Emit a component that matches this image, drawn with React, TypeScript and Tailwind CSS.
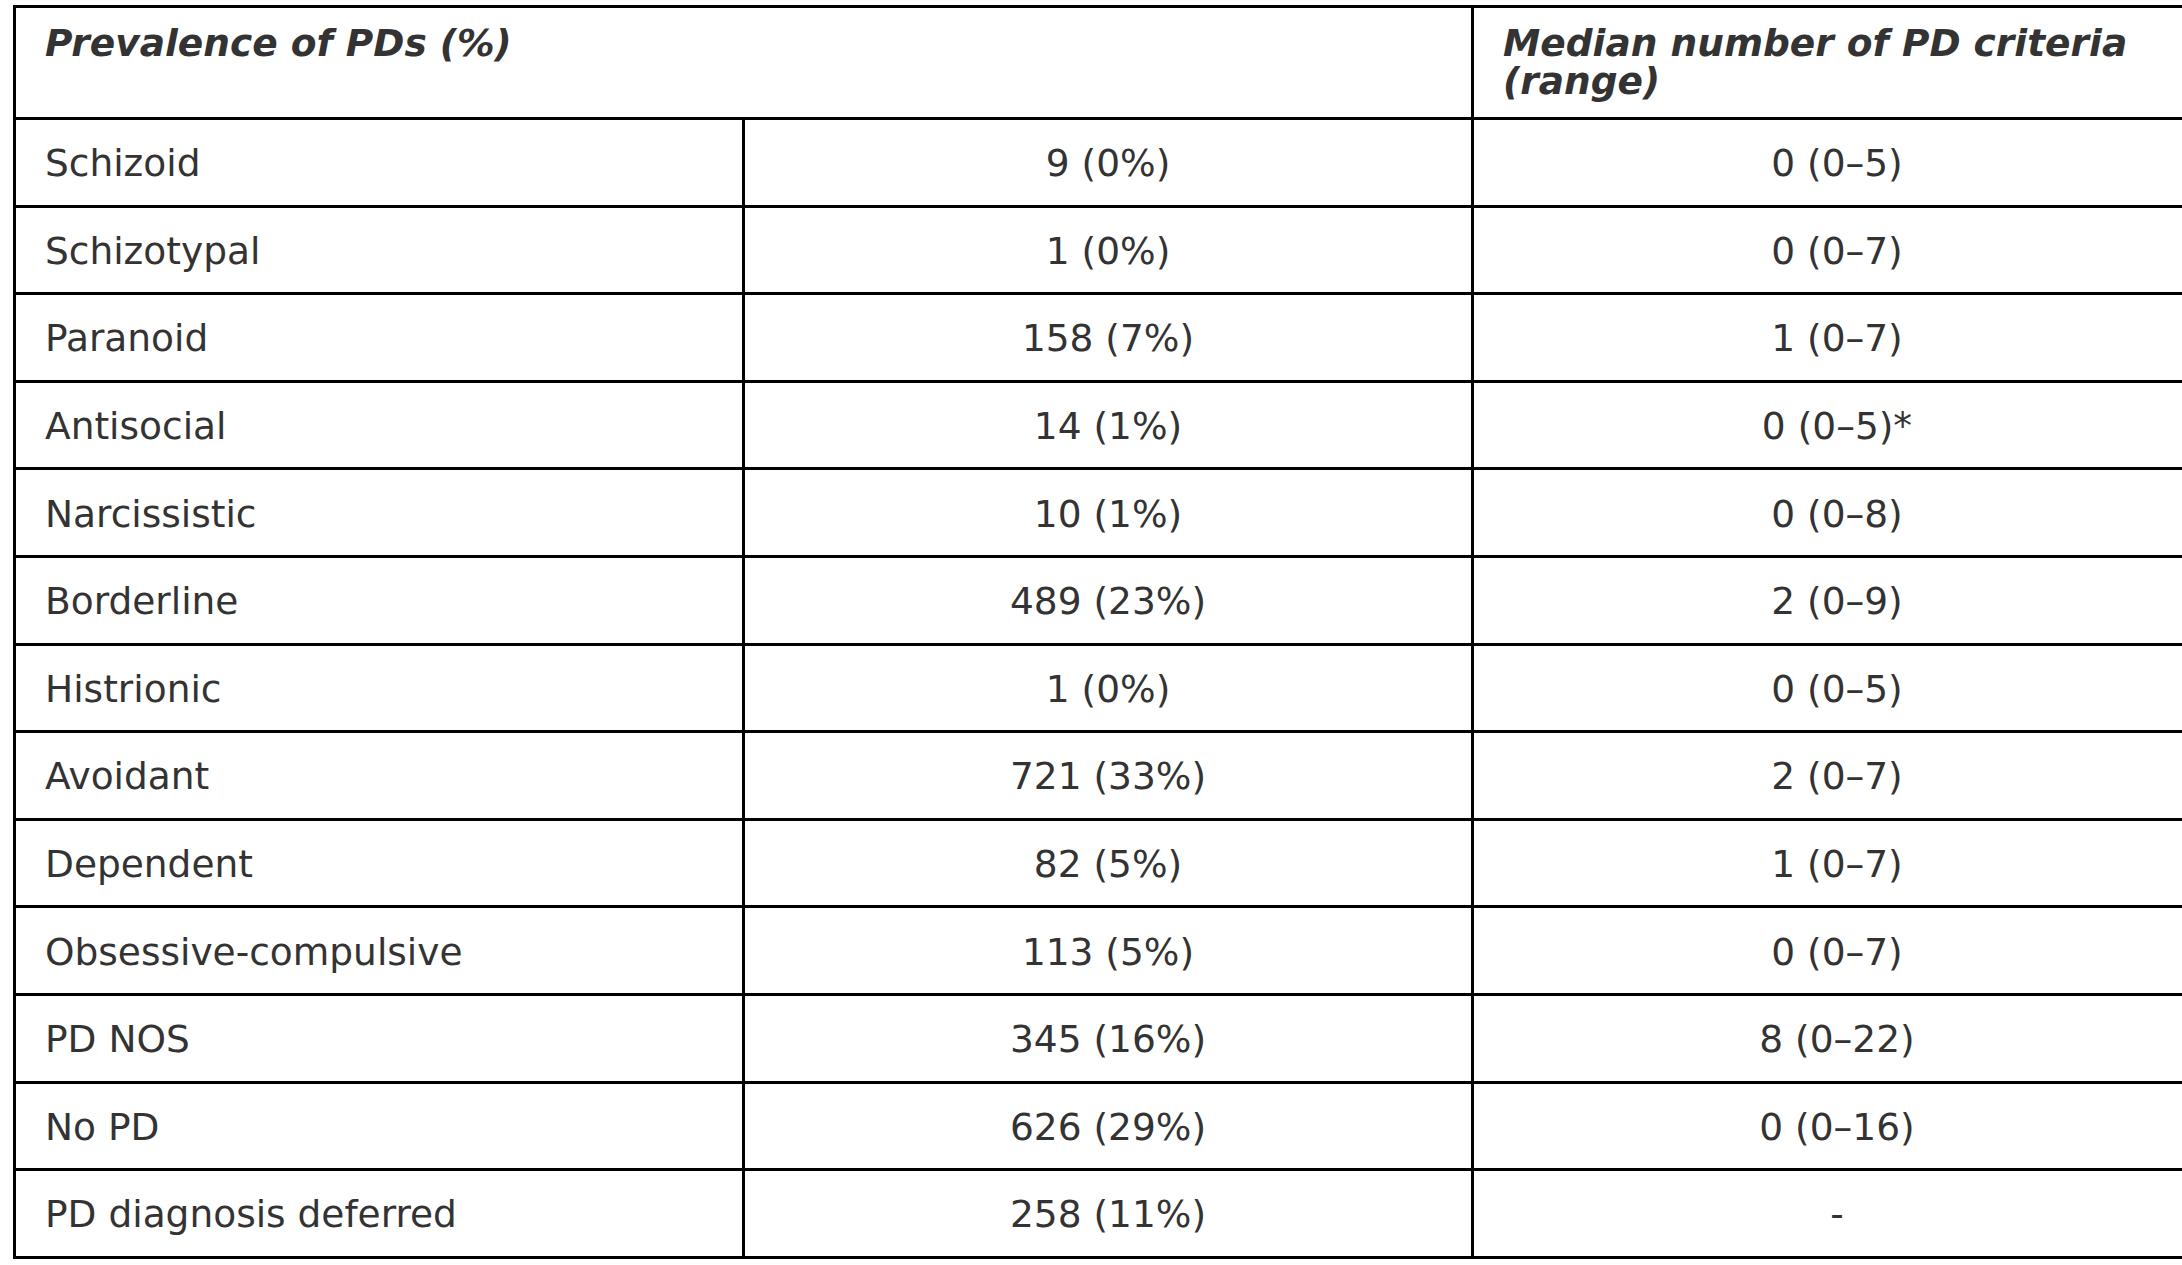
import React from "react"

const rows: [string, string, string][] = [
  ["Schizoid", "9 (0%)", "0 (0–5)"],
  ["Schizotypal", "1 (0%)", "0 (0–7)"],
  ["Paranoid", "158 (7%)", "1 (0–7)"],
  ["Antisocial", "14 (1%)", "0 (0–5)*"],
  ["Narcissistic", "10 (1%)", "0 (0–8)"],
  ["Borderline", "489 (23%)", "2 (0–9)"],
  ["Histrionic", "1 (0%)", "0 (0–5)"],
  ["Avoidant", "721 (33%)", "2 (0–7)"],
  ["Dependent", "82 (5%)", "1 (0–7)"],
  ["Obsessive-compulsive", "113 (5%)", "0 (0–7)"],
  ["PD NOS", "345 (16%)", "8 (0–22)"],
  ["No PD", "626 (29%)", "0 (0–16)"],
  ["PD diagnosis deferred", "258 (11%)", "-"]
]

const cell = "border-[3px] border-black px-[29px] pt-[2px] align-middle"

export default function App() {
  return (
    <div className="w-screen h-screen overflow-hidden bg-white pl-[13px] pt-[5px] font-['DejaVu_Sans',sans-serif] text-[#333333] text-[37.5px] leading-[38px]">
      <table className="table-fixed border-collapse w-[2187px]">
        <colgroup>
          <col className="w-[729px]" />
          <col className="w-[729px]" />
          <col className="w-[729px]" />
        </colgroup>
        <thead>
          <tr className="h-[112px]">
            <th
              colSpan={2}
              className="border-[3px] border-black px-[29px] pt-[16px] align-top text-left font-bold italic"
            >
              Prevalence of PDs (%)
            </th>
            <th className="border-[3px] border-black px-[29px] pt-[16px] align-top text-left font-bold italic">
              Median number of PD criteria (range)
            </th>
          </tr>
        </thead>
        <tbody>
          {rows.map(([name, prev, median]) => (
            <tr key={name} className="h-[87.6px]">
              <td className={`${cell} text-left`}>{name}</td>
              <td className={`${cell} text-center`}>{prev}</td>
              <td className={`${cell} text-center`}>{median}</td>
            </tr>
          ))}
        </tbody>
      </table>
    </div>
  )
}
